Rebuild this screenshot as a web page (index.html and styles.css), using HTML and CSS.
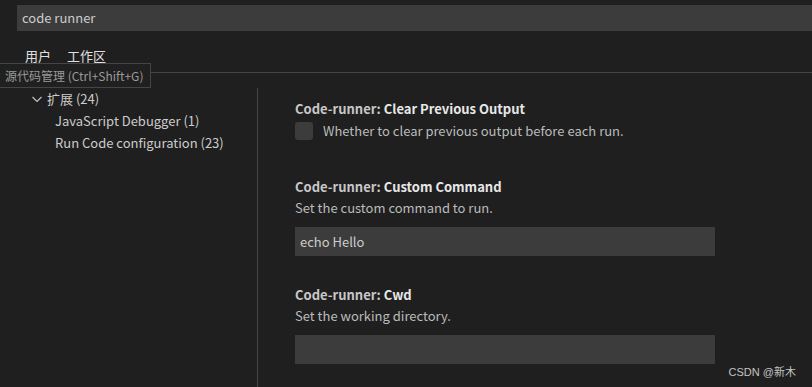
FILE: index.html
```html
<!DOCTYPE html>
<html lang="zh-CN">
<head>
    <meta charset="UTF-8">
    <meta name="viewport" content="width=device-width, initial-scale=1.0">
    <title>Settings - code runner</title>
    <link rel="stylesheet" href="styles.css">
</head>
<body>
    <div class="settings">
        <div class="search-bar">code runner</div>

        <div class="tabs">
            <span class="tab">用户</span>
            <span class="tab">工作区</span>
        </div>

        <div class="settings-body">
            <div class="toc">
                <div class="toc-row toc-group">
                    <svg class="chevron" width="16" height="16" viewBox="0 0 16 16">
                        <path d="M3.5 6l4.5 4.5 4.5-4.5" fill="none" stroke="#c5c5c5" stroke-width="1.1"/>
                    </svg>
                    <span>扩展 (24)</span>
                </div>
                <div class="toc-row toc-item">JavaScript Debugger (1)</div>
                <div class="toc-row toc-item">Run Code configuration (23)</div>
            </div>

            <div class="setting-list">
                <div class="setting setting-bool">
                    <div class="setting-title"><span class="category">Code-runner: </span><span class="name">Clear Previous Output</span></div>
                    <div class="bool-row">
                        <span class="checkbox"></span>
                        <span class="setting-desc">Whether to clear previous output before each run.</span>
                    </div>
                </div>

                <div class="setting">
                    <div class="setting-title"><span class="category">Code-runner: </span><span class="name">Custom Command</span></div>
                    <div class="setting-desc">Set the custom command to run.</div>
                    <div class="text-input">echo Hello</div>
                </div>

                <div class="setting">
                    <div class="setting-title"><span class="category">Code-runner: </span><span class="name">Cwd</span></div>
                    <div class="setting-desc">Set the working directory.</div>
                    <div class="text-input"></div>
                </div>
            </div>
        </div>

        <div class="hover-tip">源代码管理 (Ctrl+Shift+G)</div>
        <div class="watermark">CSDN @新木</div>
    </div>
</body>
</html>
```

FILE: styles.css
```css
body {
    margin: 0;
    background: #1f1f1f;
    font-family: "Noto Sans CJK SC", "Noto Sans", sans-serif;
    font-size: 13px;
    color: #cccccc;
    overflow: hidden;
}

.settings {
    position: relative;
    width: 812px;
    height: 387px;
    overflow: hidden;
}

.search-bar {
    margin: 5px 0 0 17px;
    height: 26px;
    line-height: 26px;
    padding-left: 5px;
    background: #3c3c3c;
    color: #cccccc;
}

.tabs {
    display: flex;
    gap: 16px;
    height: 41px;
    padding-left: 25px;
    align-items: flex-end;
    border-bottom: 1px solid #454545;
}

.tab {
    line-height: 18px;
    margin-bottom: 7px;
    color: #e0e0e0;
}

.settings-body {
    display: flex;
    padding-top: 15px;
    height: 300px;
}

.toc {
    width: 257px;
}

.toc-row {
    height: 22px;
    line-height: 22px;
    color: #cccccc;
}

.toc-group {
    display: flex;
    align-items: center;
    padding-left: 29px;
    gap: 2px;
}

.chevron {
    display: block;
}

.toc-item {
    padding-left: 55px;
}

.setting-list {
    border-left: 1px solid #454545;
    padding: 12px 0 0 37px;
    flex: 1;
}

.setting {
    padding-bottom: 30px;
}

.setting-bool {
    padding-bottom: 38px;
}

.setting-title {
    line-height: 18px;
}

.category {
    font-weight: 600;
    color: #c8c8c8;
}

.name {
    font-weight: 700;
    color: #e7e7e7;
}

.setting-desc {
    line-height: 18px;
    margin-top: 3px;
    color: #bbbbbb;
}

.bool-row {
    display: flex;
    align-items: center;
    gap: 10px;
    margin-top: 4px;
}

.bool-row .setting-desc {
    margin-top: 0;
}

.checkbox {
    width: 18px;
    height: 18px;
    border-radius: 3px;
    background: #3c3c3c;
}

.text-input {
    width: 415px;
    height: 29px;
    line-height: 29px;
    margin-top: 10px;
    padding-left: 5px;
    background: #3c3c3c;
    color: #cccccc;
}

.hover-tip {
    position: absolute;
    left: 0;
    top: 63px;
    width: 145px;
    height: 23px;
    line-height: 23px;
    padding-left: 5px;
    border: 1px solid #454545;
    border-left: none;
    background: #202020;
    color: #9a9a9a;
    font-size: 12px;
}

.watermark {
    position: absolute;
    right: 16px;
    bottom: 8px;
    font-family: "Liberation Sans", "Noto Sans CJK SC", sans-serif;
    font-size: 11px;
    color: #c4c4c4;
}
```
